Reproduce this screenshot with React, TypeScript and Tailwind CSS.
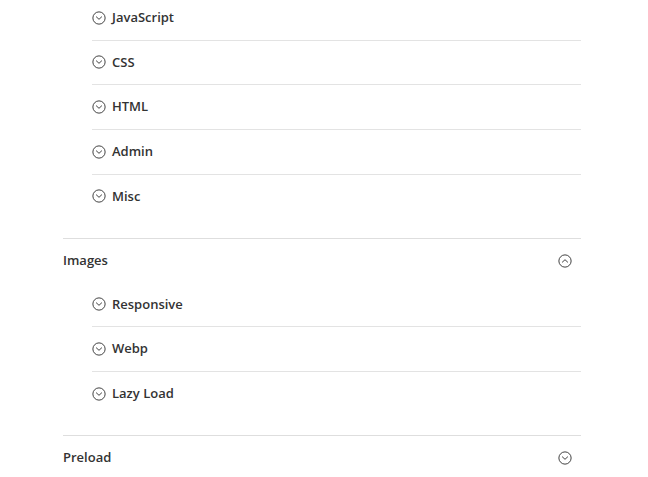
const font = { fontFamily: '"Open Sans", "Liberation Sans", sans-serif' };

function Chevron({ up = false, size = 14 }: { up?: boolean; size?: number }) {
  return (
    <svg width={size} height={size} viewBox="0 0 16 16" fill="none" stroke="#3a3a3a" strokeWidth="1.1">
      <circle cx="8" cy="8" r="7" />
      {up ? (
        <polyline points="5,9.3 8,6.5 11,9.3" strokeLinecap="round" strokeLinejoin="round" />
      ) : (
        <polyline points="5,6.7 8,9.5 11,6.7" strokeLinecap="round" strokeLinejoin="round" />
      )}
    </svg>
  );
}

function SubList({ items }: { items: string[] }) {
  return (
    <div className="ml-[29px] pb-[19.33px]">
      {items.map((name, i) => (
        <div
          key={name}
          className={`box-content flex h-[43.67px] items-center gap-[6px] ${i < items.length - 1 ? "border-b border-[#e3e3e3]" : ""}`}
        >
          <span className="flex w-[14px] justify-center">
            <Chevron />
          </span>
          <span className="text-[13px] font-semibold text-[#333]">{name}</span>
        </div>
      ))}
    </div>
  );
}

function Section({ title, open }: { title: string; open: boolean }) {
  return (
    <div className="box-content flex h-[44px] items-center justify-between border-t border-[#dedede] pr-[9px]">
      <span className="text-[13px] font-semibold text-[#333]">{title}</span>
      <Chevron up={open} />
    </div>
  );
}

export default function App() {
  return (
    <div className="h-[477px] overflow-hidden bg-white" style={font}>
      <div className="ml-[63px] -mt-[4px] w-[518px]">
        <SubList items={["JavaScript", "CSS", "HTML", "Admin", "Misc"]} />
        <Section title="Images" open />
        <SubList items={["Responsive", "Webp", "Lazy Load"]} />
        <Section title="Preload" open={false} />
      </div>
    </div>
  );
}
